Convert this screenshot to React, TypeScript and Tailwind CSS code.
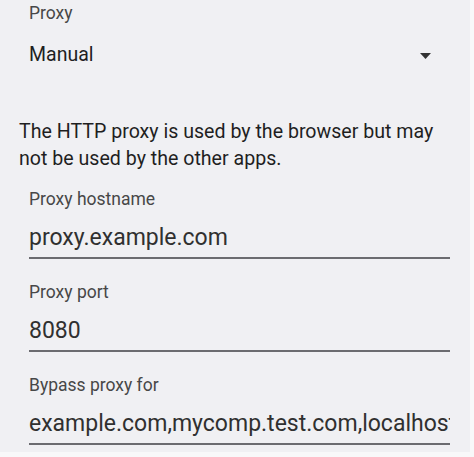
import React from 'react';

const fields = [
  { label: 'Proxy hostname', value: 'proxy.example.com' },
  { label: 'Proxy port', value: '8080' },
  { label: 'Bypass proxy for', value: 'example.com,mycomp.test.com,localhost' },
];

export default function App() {
  return (
    <div
      className="w-[474px] h-[457px] bg-[#f8f8f9] overflow-hidden"
      style={{ fontFamily: 'Roboto, "Noto Sans", Arial, sans-serif' }}
    >
      <div className="w-[470px] h-[452px] bg-[#f0f0f3] overflow-hidden">
        {/* Proxy select */}
        <div className="pl-[29px] pt-[1px]">
          <div className="text-[17.5px] leading-[24px] text-[#474747]">Proxy</div>
          <div className="mt-[16px] flex items-center justify-between w-[402px]">
            <span className="text-[19.5px] leading-[28px] text-[#1f1f1f]">Manual</span>
            <svg width="11" height="6" viewBox="0 0 11 6" className="mt-[1px]">
              <path d="M0 0 L11 0 L5.5 6 Z" fill="#333333" />
            </svg>
          </div>
        </div>

        {/* Description */}
        <p className="mt-[48.5px] ml-[19px] w-[430px] text-[19.6px] leading-[27px] text-[#1f1f1f]">
          The HTTP proxy is used by the browser but may not be used by the other apps.
        </p>

        {/* Fields */}
        <div className="pl-[29px] mt-[15px] flex flex-col gap-[20.5px]">
          {fields.map((f) => (
            <div key={f.label} className="w-[421px]">
              <div className="text-[17.5px] leading-[24px] text-[#474747]">{f.label}</div>
              <div className="mt-[11px] pb-[3.5px] border-b-2 border-[#6b6b70] overflow-hidden whitespace-nowrap text-[23px] leading-[32px] text-[#303030]">
                {f.value}
              </div>
            </div>
          ))}
        </div>
      </div>
    </div>
  );
}
